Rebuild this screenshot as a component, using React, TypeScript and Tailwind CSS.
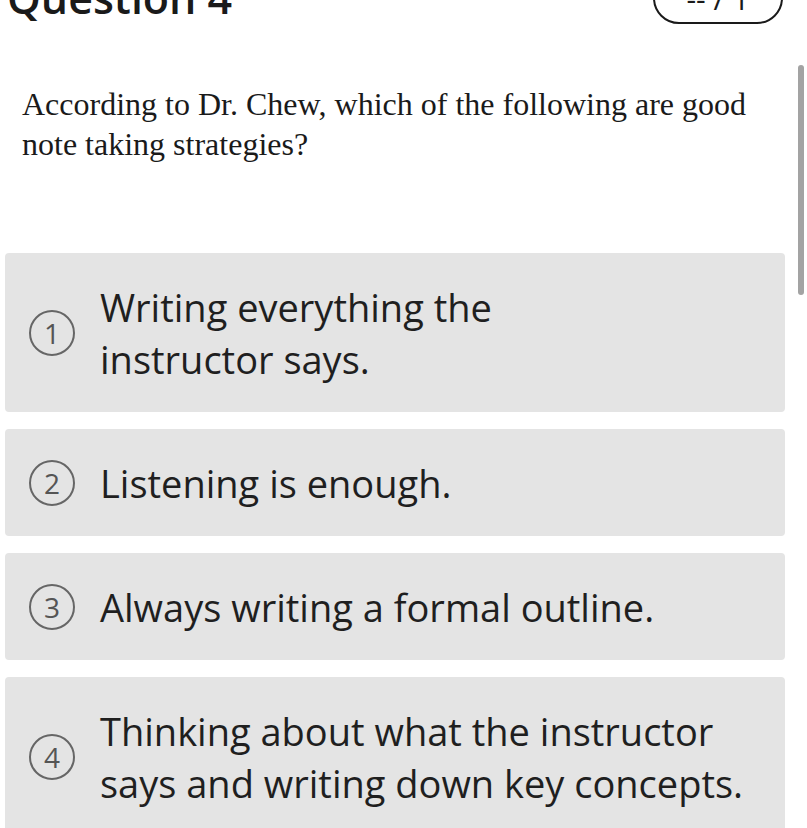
const options = [
  { n: 1, lines: ["Writing everything the", "instructor says."] },
  { n: 2, lines: ["Listening is enough."] },
  { n: 3, lines: ["Always writing a formal outline."] },
  { n: 4, lines: ["Thinking about what the instructor", "says and writing down key concepts."] },
]

export default function App() {
  return (
    <div className="relative h-[828px] overflow-hidden bg-white">
      {/* header, scrolled partly out of view */}
      <div className="-mt-[28px] flex items-center justify-between pl-[7px] pr-[24px]">
        <h1 className="text-[43px] font-semibold leading-[52px] text-[#1a1a1a] [font-family:'Open_Sans',sans-serif]">
          Question 4
        </h1>
        <div className="flex h-[52px] w-[130px] items-center justify-center rounded-full border-2 border-[#1a1a1a] text-[30px] text-[#1a1a1a] [font-family:'Open_Sans',sans-serif]">
          -- / 1
        </div>
      </div>

      <p className="mt-[60px] pl-[22px] pr-[40px] text-[32px] leading-[40px] text-[#1a1a1a] [font-family:'Liberation_Serif',serif]">
        According to Dr. Chew, which of the following are good
        <br />
        note taking strategies?
      </p>

      <div className="mt-[89px] flex flex-col gap-[17px] pl-[5px] pr-[22px]">
        {options.map((o) => (
          <div key={o.n} className="flex h-auto items-center gap-[25px] rounded-[4px] bg-[#e4e4e4] pb-[27px] pl-[24px] pr-4 pt-[28px]">
            <div className="flex h-[46px] w-[46px] shrink-0 items-center justify-center rounded-full border-2 border-[#666] text-[28px] leading-none text-[#555] [font-family:'Open_Sans',sans-serif]">
              {o.n}
            </div>
            <div className="text-[38px] leading-[52px] text-[#1f1f1f] [font-family:'Open_Sans',sans-serif]">
              {o.lines.map((l, i) => (
                <div key={i}>{l}</div>
              ))}
            </div>
          </div>
        ))}
      </div>

      {/* overlay scrollbar */}
      <div className="absolute right-[3px] top-[65px] h-[230px] w-[6px] rounded-full bg-[#a3a3a3]" />
    </div>
  )
}
